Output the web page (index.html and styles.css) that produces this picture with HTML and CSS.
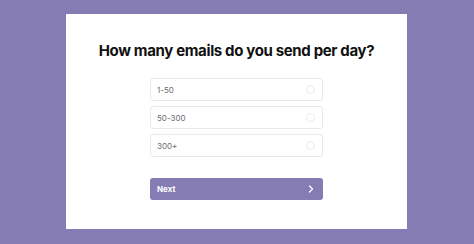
FILE: index.html
```html
<!DOCTYPE html>
<html>
<head>
<meta charset="utf-8">
<link rel="stylesheet" href="styles.css">
</head>
<body>
<div class="card">
  <h1 class="title">How many emails do you send per day?</h1>
  <div class="options">
    <div class="option"><span>1-50</span><span class="radio"></span></div>
    <div class="option"><span>50-300</span><span class="radio"></span></div>
    <div class="option"><span>300+</span><span class="radio"></span></div>
  </div>
  <button class="next"><span>Next</span>
    <svg width="8" height="8" viewBox="0 0 8 8"><path d="M2.5 1 L5.5 4 L2.5 7" fill="none" stroke="#fff" stroke-width="1.4" stroke-linecap="round" stroke-linejoin="round"/></svg>
  </button>
</div>
</body>
</html>
```
FILE: styles.css
```css
html, body { margin: 0; padding: 0; }
body {
  background: #857cb3;
  width: 474px;
  height: 244px;
  overflow: hidden;
  font-family: Inter, "Liberation Sans", sans-serif;
}
.card {
  margin: 14px 0 0 66px;
  width: 341px;
  height: 215px;
  background: #fff;
  display: flex;
  flex-direction: column;
  align-items: center;
  box-sizing: border-box;
  padding-top: 27px;
}
.title {
  margin: 0;
  font-size: 15px;
  line-height: 20px;
  font-weight: 700;
  color: #111;
  letter-spacing: -0.35px;
}
.options {
  margin-top: 17px;
  width: 173px;
  display: flex;
  flex-direction: column;
  gap: 5px;
}
.option {
  height: 23px;
  box-sizing: border-box;
  border: 1px solid #e9e9ec;
  border-radius: 3px;
  display: flex;
  align-items: center;
  justify-content: space-between;
  padding: 0 7px 0 6px;
  font-size: 8px;
  color: #6b6b70;
}
.radio {
  width: 9px;
  height: 9px;
  border-radius: 50%;
  border: 1px solid #ececef;
  box-sizing: border-box;
}
.next {
  margin-top: 21px;
  width: 173px;
  height: 22px;
  border: none;
  border-radius: 3px;
  background: #857cb3;
  color: #fff;
  font-family: inherit;
  font-weight: 700;
  font-size: 8px;
  display: flex;
  align-items: center;
  justify-content: space-between;
  padding: 0 8px 0 7px;
}
.next svg { display: block; }
```
